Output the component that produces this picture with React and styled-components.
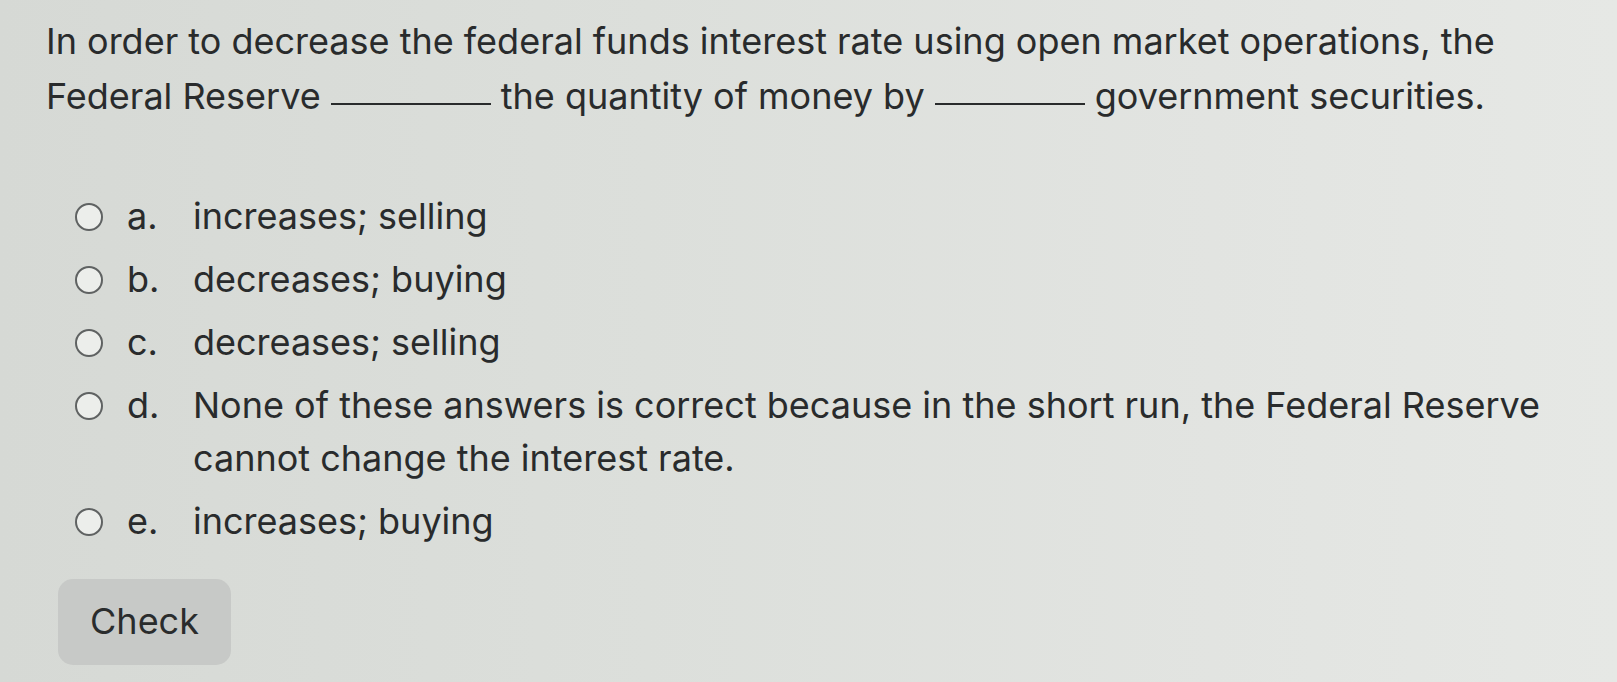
import React from "react";
import styled, { createGlobalStyle } from "styled-components";

const GlobalStyle = createGlobalStyle`
  html, body {
    margin: 0;
    padding: 0;
  }
  body {
    width: 1617px;
    height: 682px;
    overflow: hidden;
    background: linear-gradient(90deg, #d6d9d5 0%, #dcdfdb 40%, #e2e4e1 75%, #e6e8e5 100%);
    font-family: Inter, "Liberation Sans", Arial, sans-serif;
    color: #292b2c;
  }
`;

const Page = styled.div`
  padding: 14px 0 0 46px;
`;

const Question = styled.p`
  margin: 0;
  font-size: 36px;
  line-height: 55px;
  white-space: nowrap;
`;

const Blank = styled.span`
  display: inline-block;
  width: ${(p) => p.$w}px;
  height: 2px;
  background: #292b2c;
  margin: 0 10px;
  vertical-align: 4px;
`;

const Options = styled.ul`
  list-style: none;
  margin: 66px 0 0 0;
  padding: 0 0 0 29px;
  display: flex;
  flex-direction: column;
  gap: 10px;
`;

const Option = styled.li`
  display: grid;
  grid-template-columns: 28px 46px 1fr;
  column-gap: 22px;
  align-items: start;
  font-size: 36px;
  line-height: 53px;
`;

const Radio = styled.span`
  width: 24px;
  height: 24px;
  border-radius: 50%;
  border: 2px solid #5f6262;
  background: #eceeeb;
  margin-top: 13px;
`;

const Letter = styled.span`
  padding-left: 2px;
`;

const Label = styled.span`
  max-width: 1370px;
`;

const CheckButton = styled.button`
  margin: 31px 0 0 12px;
  width: 173px;
  height: 86px;
  border: none;
  border-radius: 15px;
  background: #c7c9c7;
  color: #2a2c2d;
  font-family: Inter, "Liberation Sans", Arial, sans-serif;
  font-size: 36px;
  padding: 0 0 2px;
`;

const options = [
  ["a.", "increases; selling"],
  ["b.", "decreases; buying"],
  ["c.", "decreases; selling"],
  [
    "d.",
    "None of these answers is correct because in the short run, the Federal Reserve cannot change the interest rate.",
  ],
  ["e.", "increases; buying"],
];

export default function App() {
  return (
    <>
      <GlobalStyle />
      <Page>
        <Question>
          In order to decrease the federal funds interest rate using open market operations, the
          <br />
          Federal Reserve<Blank $w={160} />the quantity of money by<Blank $w={150} />government
          securities.
        </Question>
        <Options>
          {options.map(([letter, text]) => (
            <Option key={letter}>
              <Radio />
              <Letter>{letter}</Letter>
              <Label>{text}</Label>
            </Option>
          ))}
        </Options>
        <CheckButton>Check</CheckButton>
      </Page>
    </>
  );
}
